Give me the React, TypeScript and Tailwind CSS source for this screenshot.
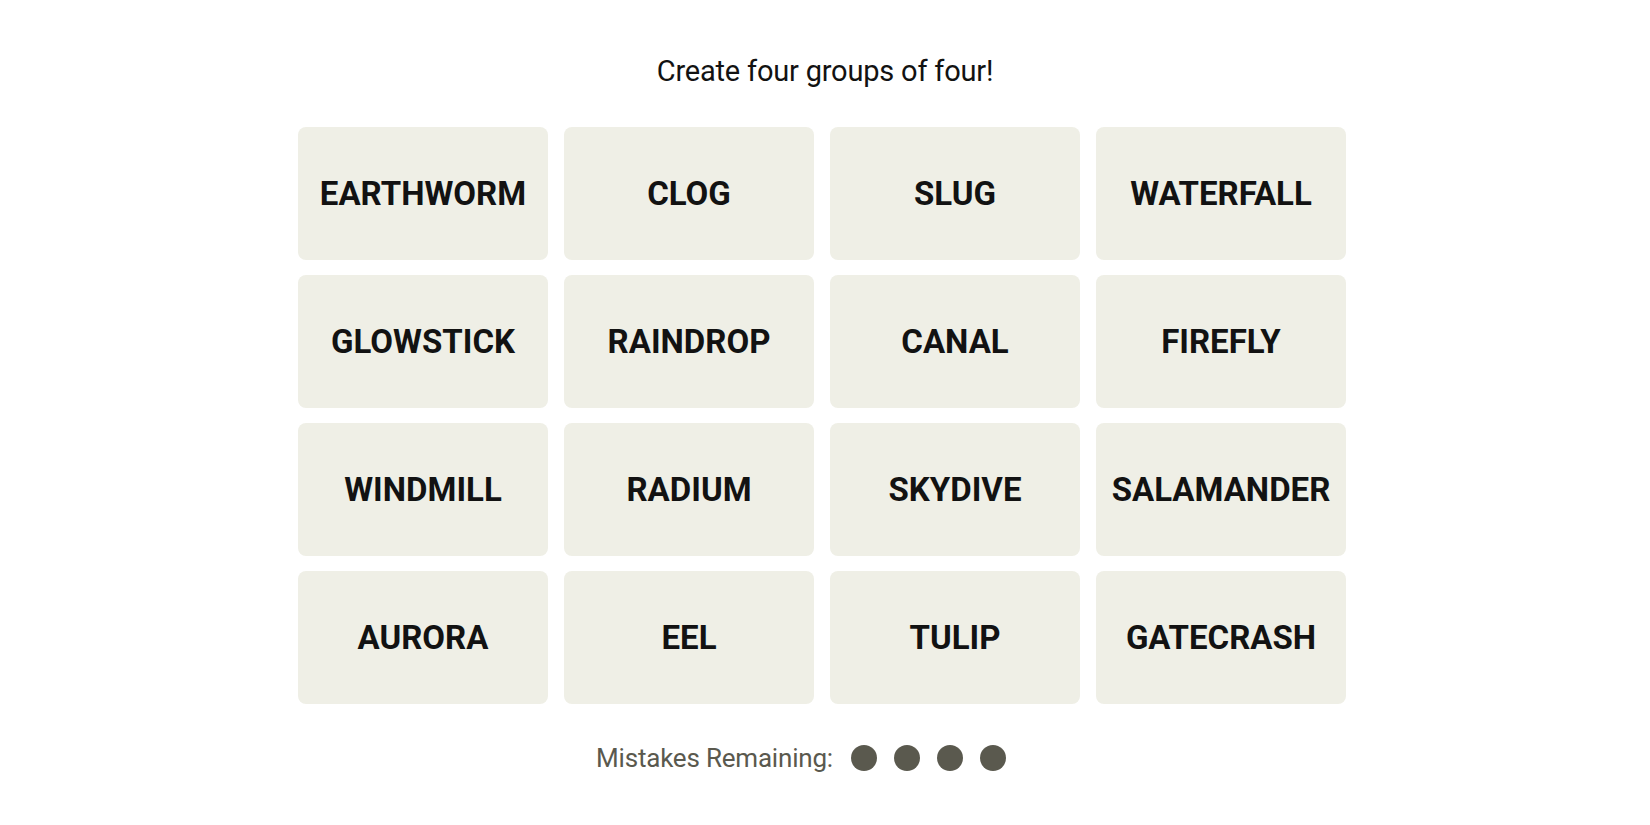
const words = [
  "EARTHWORM",
  "CLOG",
  "SLUG",
  "WATERFALL",
  "GLOWSTICK",
  "RAINDROP",
  "CANAL",
  "FIREFLY",
  "WINDMILL",
  "RADIUM",
  "SKYDIVE",
  "SALAMANDER",
  "AURORA",
  "EEL",
  "TULIP",
  "GATECRASH",
];

export default function App() {
  return (
    <div className="min-h-screen bg-white flex flex-col items-center pt-[54px] font-['Roboto',Arial,sans-serif]">
      <p className="text-[29px] leading-[34px] text-[#121212] font-normal tracking-[-0.2px]">
        Create four groups of four!
      </p>
      <div className="mt-[39px] mr-[6px] grid grid-cols-4 gap-x-[16px] gap-y-[15px] w-[1048px]">
        {words.map((w) => (
          <button
            key={w}
            className="h-[133px] rounded-[8px] bg-[#efefe6] text-[#121212] font-bold text-[33px] flex items-center justify-center"
          >
            {w}
          </button>
        ))}
      </div>
      <div className="mt-[39px] mr-[48px] flex items-center text-[#5a594e]">
        <span className="text-[26px] leading-[30px] font-normal tracking-[-0.2px] mr-[18px]">
          Mistakes Remaining:
        </span>
        <div className="flex gap-[17px]">
          <span className="w-[26px] h-[26px] rounded-full bg-[#5a594e]" />
          <span className="w-[26px] h-[26px] rounded-full bg-[#5a594e]" />
          <span className="w-[26px] h-[26px] rounded-full bg-[#5a594e]" />
          <span className="w-[26px] h-[26px] rounded-full bg-[#5a594e]" />
        </div>
      </div>
    </div>
  );
}
